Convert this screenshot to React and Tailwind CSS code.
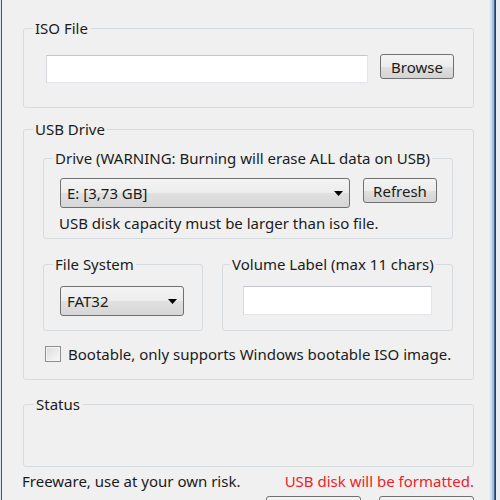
import React from "react";

function Arrow() {
  return (
    <svg width="9" height="5" viewBox="0 0 9 5" className="shrink-0">
      <path d="M0 0H9L4.5 5Z" fill="#000" />
    </svg>
  );
}

function Combo({ className, text }) {
  return (
    <div
      className={`flex items-center justify-between rounded-[3px] border border-[#707070] bg-[linear-gradient(#f4f4f4,#ececec_50%,#e0e0e0_51%,#d6d6d6)] pl-[6px] pr-[6px] ${className}`}
    >
      <span>{text}</span>
      <Arrow />
    </div>
  );
}

function Btn({ className, children }) {
  return (
    <div
      className={`flex items-center justify-center rounded-[3px] border border-[#707070] bg-[linear-gradient(#f4f4f4,#ececec_50%,#e0e0e0_51%,#d3d3d3)] ${className}`}
    >
      {children}
    </div>
  );
}

function TextBox({ className }) {
  return (
    <div
      className={`bg-white border border-[#e2e6eb] border-t-[#c2c6cc] border-l-[#d6dadf] ${className}`}
    />
  );
}

export default function App() {
  return (
    <div className="w-[500px] h-[500px] overflow-hidden flex bg-[#f0f0f0] text-[15px] leading-[18px] text-[#1b1b1b] font-['Noto_Sans',sans-serif]">
      <div className="w-[1px] shrink-0 bg-[#dfe7ef]" />
      <div className="w-[1px] shrink-0 bg-[#4b5460]" />
      <div className="w-[488px] shrink-0 pl-[21px] flex flex-col">
        {/* ISO File */}
        <fieldset className="mt-[19px] w-[451px] border border-[#d6dbe0] rounded-[3px] pb-[24px]">
          <legend className="ml-[9px] px-[2px]">ISO File</legend>
          <div className="mt-[17px] flex items-start pl-[22px]">
            <TextBox className="mt-[1px] h-[28px] w-[322px]" />
            <Btn className="ml-[12px] w-[74px] h-[25px]">Browse</Btn>
          </div>
        </fieldset>

        {/* USB Drive */}
        <fieldset className="mt-[12px] w-[451px] border border-[#d6dbe0] rounded-[3px] pb-[16px]">
          <legend className="ml-[9px] px-[2px]">USB Drive</legend>

          <fieldset className="mt-[11px] ml-[19px] w-[410px] border border-[#d6dbe0] rounded-[3px] pb-[6px]">
            <legend className="ml-[9px] px-[2px]">
              Drive (WARNING: Burning will erase ALL data on USB)
            </legend>
            <div className="mt-[11px] flex items-start pl-[16px]">
              <Combo className="w-[290px] h-[30px]" text="E: [3,73 GB]" />
              <Btn className="ml-[13px] w-[74px] h-[25px]">Refresh</Btn>
            </div>
            <div className="mt-[6px] pl-[15px]">
              USB disk capacity must be larger than iso file.
            </div>
          </fieldset>

          <div className="mt-[16px] ml-[19px] flex gap-[19px]">
            <fieldset className="w-[160px] border border-[#d6dbe0] rounded-[3px] pb-[14px]">
              <legend className="ml-[9px] px-[2px]">File System</legend>
              <div className="mt-[13px] pl-[16px]">
                <Combo className="w-[124px] h-[30px]" text="FAT32" />
              </div>
            </fieldset>
            <fieldset className="w-[231px] border border-[#d6dbe0] rounded-[3px] pb-[15px]">
              <legend className="ml-[7px] px-[2px]">Volume Label (max 11 chars)</legend>
              <div className="mt-[13px] pl-[20px]">
                <TextBox className="w-[189px] h-[29px]" />
              </div>
            </fieldset>
          </div>

          <div className="mt-[14px] ml-[21px] flex items-center">
            <div className="w-[16px] h-[16px] shrink-0 border border-[#8e8f8f] bg-[linear-gradient(135deg,#dcdcdc,#f8f8f8)] shadow-[inset_0_0_0_1px_#f4f4f4]" />
            <span className="ml-[7px] whitespace-nowrap">
              Bootable, only supports Windows bootable ISO image.
            </span>
          </div>
        </fieldset>

        {/* Status */}
        <fieldset className="mt-[15px] w-[451px] border border-[#d6dbe0] rounded-[3px]">
          <legend className="ml-[10px] px-[2px]">Status</legend>
          <div className="h-[53px]" />
        </fieldset>

        <div className="mt-[5px] -ml-[1px] w-[452px] flex justify-between whitespace-nowrap">
          <span>Freeware, use at your own risk.</span>
          <span className="text-[#f0202a]">USB disk will be formatted.</span>
        </div>

        <div className="mt-[6px] w-[451px] flex justify-end gap-[18px]">
          <Btn className="w-[95px] h-[25px]" />
          <Btn className="w-[95px] h-[25px]" />
        </div>
      </div>
      <div className="w-[2px] shrink-0 bg-[#cfe0ef]" />
      <div className="w-[2px] shrink-0 bg-[#9fc0de]" />
      <div className="w-[1px] shrink-0 bg-[#48688a]" />
      <div className="w-[1px] shrink-0 bg-[#2f3d4c]" />
      <div className="w-[4px] shrink-0 bg-[#e8edf2]" />
    </div>
  );
}
